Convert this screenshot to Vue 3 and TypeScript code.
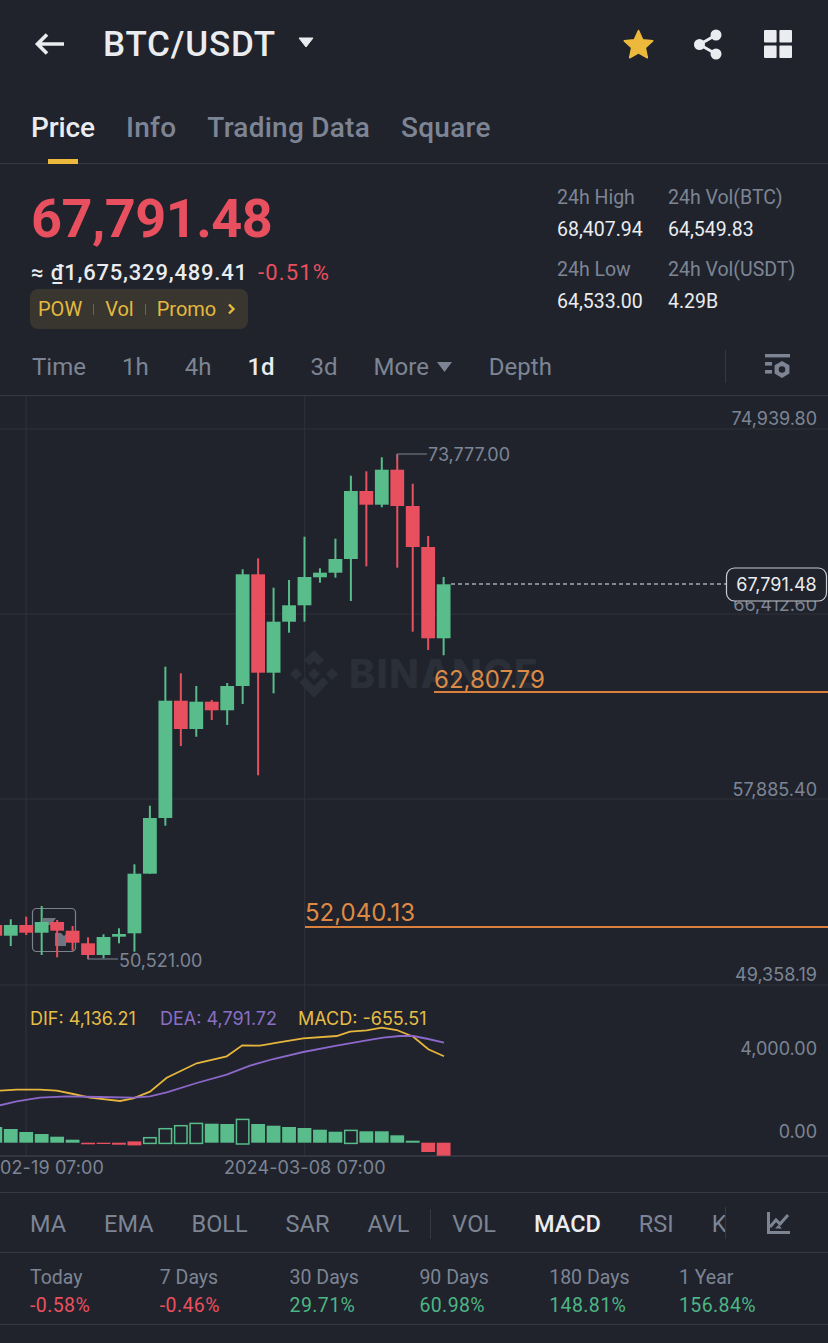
<script setup lang="ts">
type Candle = [wickTop: number, wickBot: number, bodyTop: number, bodyBot: number, up: boolean];
type Bar = [top: number, bottom: number, kind: "up" | "hollow" | "down"];

const tabs = ["Price", "Info", "Trading Data", "Square"];
const intervals = ["Time", "1h", "4h", "1d", "3d"];
const indicatorsA = ["MA", "EMA", "BOLL", "SAR", "AVL"];
const indicatorsB = ["VOL", "MACD", "RSI", "KDJ"];

const perf = [
  { label: "Today", value: "-0.58%", up: false },
  { label: "7 Days", value: "-0.46%", up: false },
  { label: "30 Days", value: "29.71%", up: true },
  { label: "90 Days", value: "60.98%", up: true },
  { label: "180 Days", value: "148.81%", up: true },
  { label: "1 Year", value: "156.84%", up: true },
];

const stats = [
  { label: "24h High", value: "68,407.94" },
  { label: "24h Vol(BTC)", value: "64,549.83" },
  { label: "24h Low", value: "64,533.00" },
  { label: "24h Vol(USDT)", value: "4.29B" },
];

// candle and bar columns share the same step
const STEP = 15.46;
const START = -4.7;
const colX = (i: number): number => START + i * STEP;

const candles: Candle[] = [
  [919, 946, 925, 935.7, false],
  [919.3, 946, 925, 935.7, true],
  [916.7, 935, 925, 932.7, false],
  [906, 955, 922, 932.7, true],
  [920, 957.3, 922, 930.7, false],
  [926, 950.7, 930.7, 942.7, false],
  [937.3, 959.3, 943.3, 955, false],
  [934.3, 958.3, 937, 955, true],
  [928.3, 943.3, 934, 936.7, true],
  [864.3, 951.7, 873.7, 933.3, true],
  [805.7, 873.7, 818, 873.7, true],
  [666.7, 825.7, 700.7, 818, true],
  [673.3, 746, 700.7, 729, false],
  [686, 736.7, 701.7, 729, true],
  [700, 720, 701.7, 710.3, false],
  [683, 725, 686, 710.3, true],
  [569.3, 704, 574.3, 686, true],
  [558.3, 775.3, 574.3, 672.7, false],
  [587.7, 693.3, 621.7, 672.7, true],
  [580, 632.7, 605.3, 621.7, true],
  [536.7, 621.7, 577, 605.3, true],
  [568.3, 582.7, 572.7, 577.3, true],
  [538.7, 577.7, 559, 572.7, true],
  [475.7, 601, 491, 559, true],
  [471.3, 566.3, 491, 504.7, false],
  [457.3, 507.3, 469.7, 504.7, true],
  [454.3, 567.7, 469.7, 506, false],
  [483.7, 631.7, 506, 547, false],
  [536, 650, 547, 638.3, false],
  [577, 655.3, 584.3, 638.3, true],
];

const BASE = 1142.7;
const bars: Bar[] = [
  [1127, BASE, "up"],
  [1129, BASE, "up"],
  [1132, BASE, "up"],
  [1134, BASE, "up"],
  [1136.7, BASE, "up"],
  [1139.7, BASE, "up"],
  [BASE, 1144.3, "down"],
  [BASE, 1144, "down"],
  [BASE, 1144.7, "down"],
  [1141.4, 1145.4, "down"],
  [1137, BASE, "hollow"],
  [1128, BASE, "hollow"],
  [1125, BASE, "hollow"],
  [1122.7, BASE, "hollow"],
  [1123.7, BASE, "up"],
  [1124, BASE, "up"],
  [1118.7, 1143.3, "hollow"],
  [1124, BASE, "up"],
  [1125.7, BASE, "up"],
  [1127, BASE, "up"],
  [1128, BASE, "up"],
  [1129.7, BASE, "up"],
  [1131.7, BASE, "up"],
  [1129.7, BASE, "hollow"],
  [1131.3, BASE, "up"],
  [1131.3, BASE, "up"],
  [1135.3, BASE, "up"],
  [1140.7, BASE, "up"],
  [BASE, 1152, "down"],
  [BASE, 1155.7, "down"],
];

function toLine(points: number[][]): string {
  return points.map(([x, y]) => `${(x / 3).toFixed(1)},${(1000 + y / 3).toFixed(1)}`).join(" ");
}

// traced from the indicator pane
const difLine = toLine([
  [0, 272], [50, 269], [120, 269], [170, 272], [220, 282], [270, 293], [360, 303], [400, 295],
  [450, 275], [500, 233], [590, 190], [680, 169], [727, 136], [780, 137], [850, 125], [910, 115],
  [1010, 108], [1050, 95], [1100, 91], [1145, 83], [1190, 90], [1240, 110], [1285, 148], [1332, 169],
]);
const deaLine = toLine([
  [0, 316], [50, 304], [120, 293], [200, 289], [300, 291], [400, 293], [450, 289], [500, 277],
  [590, 249], [680, 224], [750, 197], [820, 177], [910, 156], [1010, 137], [1100, 121], [1150, 113],
  [1200, 108], [1240, 108], [1285, 117], [1332, 128],
]);

const gridY = [429, 614, 799, 985];
const gridX = [26, 304.7];
const axisLabels = [
  { text: "74,939.80", y: 425 },
  { text: "66,412.60", y: 611 },
  { text: "57,885.40", y: 796 },
  { text: "49,358.19", y: 981 },
  { text: "4,000.00", y: 1055 },
  { text: "0.00", y: 1138 },
];
</script>

<template>
  <div class="screen">
    <header class="topbar">
      <svg class="back" width="32" height="24" viewBox="0 0 32 24" fill="none">
        <path d="M30 12H4M13 2.5L3.5 12l9.5 9.5" stroke="#eaecef" stroke-width="3.6" />
      </svg>
      <span class="pair">BTC/USDT</span>
      <svg class="pair-caret" width="16" height="11" viewBox="0 0 16 11">
        <path d="M1 1h14L8 10z" fill="#eaecef" stroke="#eaecef" stroke-width="1" stroke-linejoin="round" />
      </svg>
      <div class="top-icons">
        <svg width="31" height="31" viewBox="0 0 31 31">
          <path
            d="M15.5 1.5l4.2 9.3 10 1.1-7.4 6.8 2 10-8.8-5-8.8 5 2-10-7.4-6.8 10-1.1z"
            fill="#ecb93c"
            stroke="#ecb93c"
            stroke-width="1.6"
            stroke-linejoin="round"
          />
        </svg>
        <svg width="30" height="31" viewBox="0 0 30 31" fill="#eaecef">
          <circle cx="5.5" cy="15.5" r="5.5" />
          <circle cx="22" cy="6" r="5.5" />
          <circle cx="22" cy="25" r="5.5" />
          <path d="M5.5 15.5L22 6M5.5 15.5L22 25" stroke="#eaecef" stroke-width="3" />
        </svg>
        <svg width="28" height="28" viewBox="0 0 28 28" fill="#eaecef">
          <rect x="0" y="0" width="12.6" height="12.6" rx="1" />
          <rect x="15.4" y="0" width="12.6" height="12.6" rx="1" />
          <rect x="0" y="15.4" width="12.6" height="12.6" rx="1" />
          <rect x="15.4" y="15.4" width="12.6" height="12.6" rx="1" />
        </svg>
      </div>
    </header>

    <nav class="tabs">
      <span v-for="(tab, i) in tabs" :key="tab" class="tab" :class="{ 'tab--active': i === 0 }">{{ tab }}</span>
    </nav>

    <section class="summary">
      <div class="summary__left">
        <div class="price">67,791.48</div>
        <div class="fiat">
          <span>≈ ₫1,675,329,489.41</span>
          <span class="fiat__change">-0.51%</span>
        </div>
        <div class="badges">
          <span>POW</span>
          <i class="badges__sep"></i>
          <span>Vol</span>
          <i class="badges__sep"></i>
          <span>Promo</span>
          <svg width="9" height="12" viewBox="0 0 9 12" fill="none">
            <path d="M2 1.5L6.5 6 2 10.5" stroke="#e5b93f" stroke-width="2.4" />
          </svg>
        </div>
      </div>
      <div class="stats">
        <div v-for="s in stats" :key="s.label" class="stat">
          <span class="stat__label">{{ s.label }}</span>
          <span class="stat__value">{{ s.value }}</span>
        </div>
      </div>
    </section>

    <div class="intervals">
      <span v-for="it in intervals" :key="it" :class="{ 'is-active': it === '1d' }">{{ it }}</span>
      <span class="more">
        More
        <svg width="17" height="12" viewBox="0 0 17 12">
          <path d="M1 1h15L8.5 11z" fill="#7d8594" />
        </svg>
      </span>
      <span>Depth</span>
      <i class="intervals__divider"></i>
      <svg class="intervals__icon" width="26" height="25" viewBox="0 0 26 25" fill="#7d8594">
        <rect x="1" y="0" width="25" height="3.4" />
        <rect x="1" y="8" width="7" height="3.6" />
        <rect x="1" y="16" width="7" height="3.6" />
        <path
          fill-rule="evenodd"
          d="M18 7l7.4 4.2v8.4L18 24l-7.4-4.4v-8.4zM18 12.2a3.3 3.3 0 100 6.6 3.3 3.3 0 000-6.6z"
        />
      </svg>
    </div>

    <div class="chart">
      <svg width="828" height="796" viewBox="0 396 828 796">
        <line v-for="y in gridY" :key="y" x1="0" x2="828" :y1="y" :y2="y" class="grid" />
        <line v-for="x in gridX" :key="x" :x1="x" :x2="x" y1="396" y2="1156" class="grid" />
        <line x1="0" x2="828" y1="1156" y2="1156" class="axis" />

        <!-- watermark -->
        <g fill="#2b2f38">
          <path d="M314 650l10 10-5.500 5.500-4.500-4.500-4.500 4.500-5.500-5.500zM296 668l6 6-6 6-6-6zM332 668l6 6-6 6-6-6zM314 668l6 6-6 6-6-6zM299.500 682.500l5.500-5.500 9 9 9-9 5.500 5.500-14.500 15.500z" />
          <text x="349" y="688" class="watermark">BINANCE</text>
        </g>

        <text v-for="a in axisLabels" :key="a.text" x="817" :y="a.y" text-anchor="end" class="label">{{ a.text }}</text>

        <!-- buy / sell markers under the candles -->
        <path d="M43 918h13l-5 7h-8zM55 933h6l3 3 3-3h-1v13h-11z" fill="#6f7683" />
        <rect x="32.5" y="908.5" width="43" height="43" rx="4" fill="none" stroke="#7b828e" stroke-width="1.2" />

        <g v-for="(c, i) in candles" :key="i" :fill="c[4] ? '#58bd8a' : '#e9505f'">
          <rect :x="colX(i) - 1" :y="c[0]" width="2" :height="c[1] - c[0]" />
          <rect :x="colX(i) - 6.9" :y="c[2]" width="13.8" :height="c[3] - c[2]" />
        </g>

        <path d="M397 459v-5h30" fill="none" stroke="#7d8594" stroke-width="1" />
        <text x="428" y="461" class="label">73,777.00</text>
        <path d="M88 955v4h30" fill="none" stroke="#7d8594" stroke-width="1" />
        <text x="119" y="967" class="label">50,521.00</text>

        <line x1="451" x2="726" y1="584" y2="584" stroke="#eaecef" stroke-width="1" stroke-dasharray="4 3" />
        <rect x="726.5" y="568" width="100" height="33" rx="8" fill="#20232c" stroke="#c9ccd2" stroke-width="1.2" />
        <text x="776.5" y="591" text-anchor="middle" class="label label--last">67,791.48</text>

        <text x="434" y="688" class="level">62,807.79</text>
        <line x1="434" x2="828" y1="692" y2="692" class="level-line" />
        <text x="305" y="921" class="level">52,040.13</text>
        <line x1="305" x2="828" y1="927" y2="927" class="level-line" />

        <text x="30" y="1025" class="legend" fill="#e6bd45">DIF: 4,136.21</text>
        <text x="160" y="1025" class="legend" fill="#8a6fc4">DEA: 4,791.72</text>
        <text x="298" y="1025" class="legend" fill="#e6bd45">MACD: -655.51</text>

        <polyline :points="difLine" fill="none" stroke="#e6b53d" stroke-width="1.8" />
        <polyline :points="deaLine" fill="none" stroke="#8b68c9" stroke-width="1.8" />

        <g v-for="(b, i) in bars" :key="'b' + i">
          <rect
            v-if="b[2] === 'hollow'"
            :x="colX(i) - 6.2"
            :y="b[0] + 0.7"
            width="12.4"
            :height="b[1] - b[0]"
            fill="none"
            stroke="#58bd8a"
            stroke-width="1.5"
          />
          <rect
            v-else
            :x="colX(i) - 6.9"
            :y="b[0]"
            width="13.8"
            :height="b[1] - b[0]"
            :fill="b[2] === 'up' ? '#58bd8a' : '#e9505f'"
          />
        </g>

        <text x="0" y="1174" class="label label--time">02-19 07:00</text>
        <text x="224" y="1174" class="label label--time">2024-03-08 07:00</text>
      </svg>
    </div>

    <div class="indicators">
      <div class="indicators__scroll">
        <span v-for="name in indicatorsA" :key="name">{{ name }}</span>
        <i class="indicators__divider"></i>
        <span v-for="name in indicatorsB" :key="name" :class="{ 'is-active': name === 'MACD' }">{{ name }}</span>
      </div>
      <svg class="indicators__icon" width="23" height="22" viewBox="0 0 23 22" fill="none" stroke="#7d8594">
        <path d="M1.5 0v20.5H23" stroke-width="3" />
        <path d="M3 15l6-7 4 4 8-9" stroke-width="3" />
        <path d="M8 16.5h7l-3.5-3.5z" fill="#7d8594" stroke="none" />
      </svg>
    </div>

    <div class="perf">
      <div v-for="p in perf" :key="p.label" class="perf__item">
        <span class="perf__label">{{ p.label }}</span>
        <span class="perf__value" :class="p.up ? 'txt-up' : 'txt-down'">{{ p.value }}</span>
      </div>
    </div>
  </div>
</template>

<style scoped>
.screen {
  width: 828px;
  height: 1343px;
  overflow: hidden;
  background: #20232c;
  color: #eaecef;
  font-family: Roboto, "Noto Sans", sans-serif;
}

.topbar {
  height: 88px;
  display: flex;
  align-items: center;
  padding: 0 36px 0 34px;
  box-sizing: border-box;
}
.pair {
  margin-left: 37px;
  font-size: 35px;
  font-weight: 500;
  letter-spacing: 0.8px;
}
.pair-caret {
  margin-left: 22px;
  margin-top: -4px;
}
.top-icons {
  margin-left: auto;
  display: flex;
  align-items: center;
  gap: 40px;
}

.tabs {
  height: 76px;
  display: flex;
  gap: 31px;
  padding: 0 31px;
  border-bottom: 1px solid #343842;
  font-size: 28px;
  font-weight: 500;
  letter-spacing: 0.25px;
  color: #7d8594;
  box-sizing: border-box;
}
.tab {
  position: relative;
  padding-top: 23px;
}
.tab--active {
  color: #eaecef;
  letter-spacing: -0.1px;
}
.tab--active::after {
  content: "";
  position: absolute;
  left: 17px;
  bottom: -1px;
  width: 30px;
  height: 5px;
  background: #ecb93c;
}

.summary {
  height: 186px;
  display: flex;
  justify-content: space-between;
  padding: 0 31px 0 30px;
}
.summary__left {
  display: flex;
  flex-direction: column;
}
.price {
  margin-top: 22px;
  padding-left: 1px;
  font-size: 54px;
  line-height: 66px;
  font-weight: 700;
  letter-spacing: -0.5px;
  color: #e9505f;
}
.fiat {
  margin-top: 6px;
  padding-left: 1px;
  display: flex;
  gap: 10px;
  font-size: 22px;
  line-height: 30px;
  font-weight: 500;
  letter-spacing: 0.8px;
}
.fiat__change {
  color: #e9505f;
  font-weight: 400;
  letter-spacing: 1.2px;
}
.badges {
  margin-top: 1px;
  width: 218px;
  height: 40px;
  box-sizing: border-box;
  padding: 0 8px;
  display: flex;
  align-items: center;
  gap: 11px;
  border-radius: 8px;
  background: #38362f;
  color: #e5b93f;
  font-size: 20px;
}
.badges__sep {
  width: 1px;
  height: 11px;
  background: #6e6638;
}
.stats {
  margin-top: 22px;
  display: grid;
  grid-template-columns: 111px 129px;
  grid-auto-rows: 72px;
}
.stat {
  display: flex;
  flex-direction: column;
  gap: 9px;
  font-size: 19.5px;
  line-height: 23px;
  white-space: nowrap;
}
.stat__label {
  color: #7d8594;
}

.intervals {
  height: 46px;
  display: flex;
  align-items: center;
  gap: 36px;
  padding: 0 38px 12px 32px;
  box-sizing: border-box;
  font-size: 24px;
  color: #7d8594;
  border-bottom: 1px solid #343842;
}
.intervals .is-active {
  color: #eaecef;
  font-weight: 500;
}
.more {
  display: flex;
  align-items: center;
  gap: 7px;
}
.intervals__divider {
  margin-left: auto;
  width: 1px;
  height: 33px;
  background: #343842;
}
.intervals__icon {
  margin-left: 2px;
}

.chart {
  height: 796px;
}
.chart svg {
  display: block;
}
.grid {
  stroke: #2e323b;
  stroke-width: 1;
}
.axis {
  stroke: #3a3e48;
  stroke-width: 1.5;
}
.label {
  font-family: Inter, sans-serif;
  font-size: 18px;
  fill: #7d8594;
}
.label--last {
  fill: #eaecef;
}
.label--time {
  letter-spacing: 0.12px;
}
.watermark {
  font-family: Inter, sans-serif;
  font-size: 39px;
  font-weight: 800;
  letter-spacing: 1.5px;
}
.level {
  font-family: Inter, sans-serif;
  font-size: 24px;
  fill: #dd8a45;
}
.level-line {
  stroke: #d9813d;
  stroke-width: 2;
}
.legend {
  font-family: Inter, sans-serif;
  font-size: 18px;
}

.indicators {
  height: 61px;
  box-sizing: border-box;
  display: flex;
  align-items: center;
  border-top: 1px solid #343842;
  border-bottom: 1px solid #343842;
  font-size: 23.5px;
  color: #7d8594;
}
.indicators__scroll {
  width: 726px;
  height: 32px;
  flex: none;
  display: flex;
  align-items: center;
  gap: 38px;
  padding: 2px 0 0 30px;
  box-sizing: border-box;
  overflow: hidden;
  border-right: 1px solid #343842;
  white-space: nowrap;
}
.indicators__divider {
  flex: none;
  width: 1px;
  height: 30px;
  margin: 0 -17px;
  background: #343842;
}
.indicators .is-active {
  color: #eaecef;
  font-weight: 500;
}
.indicators__icon {
  margin-left: 41px;
}

.perf {
  height: 72px;
  display: grid;
  grid-template-columns: repeat(6, 129.8px);
  padding: 13px 0 0 30px;
  box-sizing: border-box;
  border-bottom: 1px solid #343842;
  font-size: 19.5px;
}
.perf__item {
  display: flex;
  flex-direction: column;
  gap: 5px;
  line-height: 23px;
}
.perf__label {
  color: #7d8594;
}
.perf__value {
  letter-spacing: 0.4px;
}
.txt-up {
  color: #4db584;
}
.txt-down {
  color: #e9505f;
}
</style>

<style>
body {
  background: #20232c;
}
</style>
